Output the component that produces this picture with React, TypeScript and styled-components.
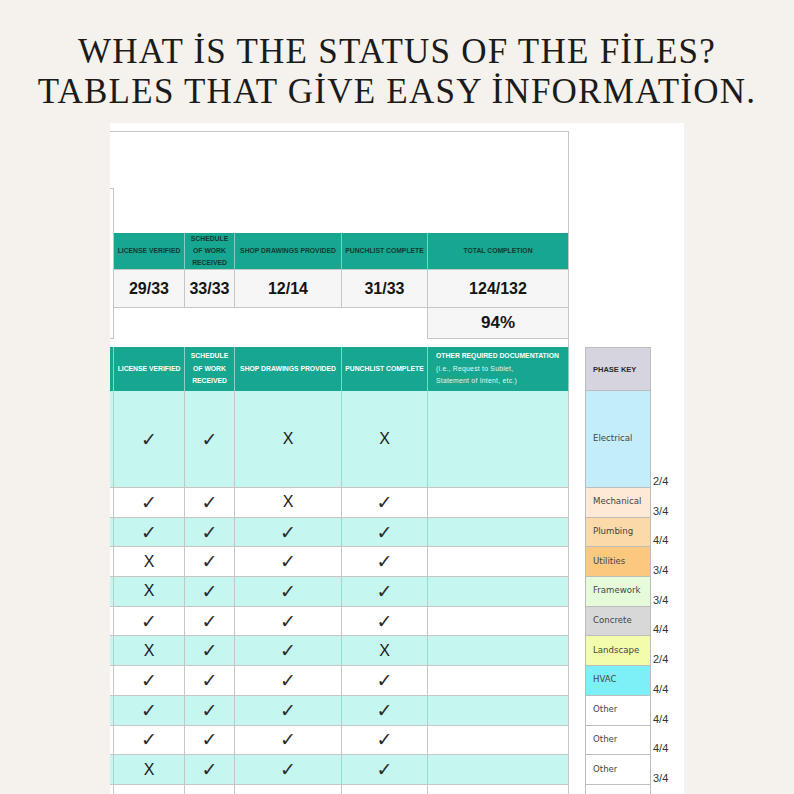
import React from 'react';
import styled, { createGlobalStyle } from 'styled-components';

const LINE = '#c6c6c6';
const TEAL = '#17a68f';
const MINT = '#c5f6ef';

const Global = createGlobalStyle`
  html, body { margin: 0; padding: 0; background: #f5f1ec; overflow: hidden; }
  #root { width: 794px; height: 794px; }
  * { box-sizing: border-box; }
`;

const Page = styled.div`
  width: 794px;
  height: 794px;
  overflow: hidden;
  background: #f5f1ec;
  display: flex;
  flex-direction: column;
`;

const Title = styled.h1`
  margin: 0;
  padding-top: 32px;
  text-align: center;
  font-family: "Liberation Serif", "DejaVu Serif", serif;
  font-weight: 400;
  font-size: 35px;
  line-height: 40px;
  letter-spacing: 1.25px;
  color: #1b1b1b;
`;

const TitleLine = styled.span`
  display: block;
  white-space: nowrap;
`;

const Panel = styled.div`
  margin: 11px 0 0 110px;
  width: 574px;
  flex: 1;
  background: #ffffff;
  overflow: hidden;
  font-family: "Liberation Sans", Arial, sans-serif;
`;

/* ---------- summary box ---------- */

const TopBox = styled.div`
  margin-top: 8px;
  width: 459px;
  border-top: 1px solid ${LINE};
  border-right: 1px solid ${LINE};
  display: grid;
  grid-template-columns: 4px 71px 50px 107px 86px 140px;
  grid-template-rows: 56px 45px 37px 38px 31px;
`;

const Blank = styled.div<{ $from: number; $to: number; $edge?: boolean }>`
  grid-column: ${(p) => p.$from} / ${(p) => p.$to};
  border-right: ${(p) => (p.$edge ? `1px solid ${LINE}` : 'none')};
`;

const SideEdge = styled.div<{ $top?: boolean; $bottom?: boolean }>`
  border-right: 1px solid ${LINE};
  border-top: ${(p) => (p.$top ? `1px solid ${LINE}` : 'none')};
  border-bottom: ${(p) => (p.$bottom ? `1px solid ${LINE}` : 'none')};
`;

const SumHead = styled.div<{ $last?: boolean }>`
  background: ${TEAL};
  color: #123a33;
  font-size: 6.8px;
  font-weight: 700;
  line-height: 12px;
  text-align: center;
  display: flex;
  flex-direction: column;
  align-items: center;
  justify-content: center;
  border-right: ${(p) => (p.$last ? 'none' : '1px solid #86cbbf')};
  border-bottom: 1px solid ${LINE};
  white-space: nowrap;
`;

const SumValue = styled.div<{ $last?: boolean }>`
  background: #f6f6f6;
  color: #151515;
  font-size: 16px;
  font-weight: 700;
  display: flex;
  align-items: center;
  justify-content: center;
  border-right: ${(p) => (p.$last ? 'none' : `1px solid ${LINE}`)};
  border-bottom: 1px solid ${LINE};
`;

const PctCell = styled(SumValue)`
  font-size: 17px;
`;

const BoxGap = styled.div`
  width: 459px;
  height: 8px;
  border-right: 1px solid ${LINE};
`;

/* ---------- detail table ---------- */

const Row = styled.div<{ $h: number }>`
  display: flex;
  height: ${(p) => p.$h}px;
`;

const Main = styled.div`
  flex: none;
  width: 459px;
  display: grid;
  grid-template-columns: 4px 71px 50px 107px 86px 141px;
`;

const HeadCell = styled.div<{ $left?: boolean }>`
  background: ${TEAL};
  color: #ffffff;
  font-size: 6.8px;
  font-weight: 700;
  line-height: 12.5px;
  text-align: ${(p) => (p.$left ? 'left' : 'center')};
  display: flex;
  flex-direction: column;
  align-items: ${(p) => (p.$left ? 'flex-start' : 'center')};
  justify-content: ${(p) => (p.$left ? 'flex-start' : 'center')};
  padding: ${(p) => (p.$left ? '3px 0 0 8px' : '0')};
  border-right: 1px solid #8fcfc4;
  white-space: nowrap;
`;

const HeadNote = styled.span`
  font-weight: 400;
  color: #e4f6f2;
  letter-spacing: 0.25px;
`;

const Cell = styled.div<{ $bg: string }>`
  background: ${(p) => p.$bg};
  border-right: 1px solid ${LINE};
  border-bottom: 1px solid ${LINE};
  display: flex;
  align-items: center;
  justify-content: center;
  color: #1d1d1d;
`;

const Check = styled.span`
  font-family: "DejaVu Sans ExtraLight", "DejaVu Sans", sans-serif;
  font-size: 19px;
  line-height: 1;
  color: #2a2a2a;
`;

const Cross = styled.span`
  font-family: "Liberation Sans", Arial, sans-serif;
  font-size: 16px;
  line-height: 1;
  color: #1a1a1a;
`;

const KeyCell = styled.div<{ $bg: string; $head?: boolean }>`
  flex: none;
  margin-left: 16px;
  width: 66px;
  background: ${(p) => p.$bg};
  border: 1px solid #bdbdbd;
  border-top: ${(p) => (p.$head ? '1px solid #bdbdbd' : 'none')};
  display: flex;
  align-items: center;
  padding-left: 7px;
  font-family: ${(p) => (p.$head ? '"Liberation Sans", Arial, sans-serif' : '"DejaVu Sans", sans-serif')};
  font-size: ${(p) => (p.$head ? '7.5px' : '8.6px')};
  font-weight: ${(p) => (p.$head ? 700 : 400)};
  color: ${(p) => (p.$head ? '#2b2b2b' : '#454545')};
  padding-bottom: ${(p) => (p.$head ? '0' : '2px')};
`;

const Fraction = styled.div`
  align-self: flex-end;
  padding-left: 2px;
  margin-bottom: 1px;
  font-family: "Liberation Sans", Arial, sans-serif;
  font-size: 11px;
  line-height: 12px;
  color: #333333;
`;

type DataRow = { marks: string; key: string; color: string; frac: string; h: number };

const ROWS: DataRow[] = [
  { marks: 'vvxx', key: 'Electrical', color: '#c3eef9', frac: '2/4', h: 97 },
  { marks: 'vvxv', key: 'Mechanical', color: '#fde9d5', frac: '3/4', h: 29.7 },
  { marks: 'vvvv', key: 'Plumbing', color: '#fcd9a8', frac: '4/4', h: 29.7 },
  { marks: 'xvvv', key: 'Utilities', color: '#fbc880', frac: '3/4', h: 29.7 },
  { marks: 'xvvv', key: 'Framework', color: '#e6fbd9', frac: '3/4', h: 29.7 },
  { marks: 'vvvv', key: 'Concrete', color: '#d8d8d8', frac: '4/4', h: 29.7 },
  { marks: 'xvvx', key: 'Landscape', color: '#f3fcaa', frac: '2/4', h: 29.7 },
  { marks: 'vvvv', key: 'HVAC', color: '#7df0f7', frac: '4/4', h: 29.7 },
  { marks: 'vvvv', key: 'Other', color: '#ffffff', frac: '4/4', h: 29.7 },
  { marks: 'vvvv', key: 'Other', color: '#ffffff', frac: '4/4', h: 29.7 },
  { marks: 'xvvv', key: 'Other', color: '#ffffff', frac: '3/4', h: 29.7 },
  { marks: 'vvvv', key: 'Other', color: '#ffffff', frac: '4/4', h: 29.7 },
];

const Mark = ({ m }: { m: string }) => (m === 'v' ? <Check>✓</Check> : <Cross>X</Cross>);

const SUMMARY = [
  { head: 'LICENSE VERIFIED', value: '29/33' },
  { head: 'SCHEDULE\nOF WORK\nRECEIVED', value: '33/33' },
  { head: 'SHOP DRAWINGS PROVIDED', value: '12/14' },
  { head: 'PUNCHLIST COMPLETE', value: '31/33' },
  { head: 'TOTAL COMPLETION', value: '124/132' },
];

const HEADS = ['LICENSE VERIFIED', 'SCHEDULE\nOF WORK\nRECEIVED', 'SHOP DRAWINGS PROVIDED', 'PUNCHLIST COMPLETE'];

const Lines = ({ text }: { text: string }) => (
  <>
    {text.split('\n').map((t, i) => (
      <span key={i}>{t}</span>
    ))}
  </>
);

export default function App() {
  return (
    <Page>
      <Global />
      <Title>
        <TitleLine>WHAT İS THE STATUS OF THE FİLES?</TitleLine>
        <TitleLine>TABLES THAT GİVE EASY İNFORMATİON.</TitleLine>
      </Title>
      <Panel>
        <TopBox>
          <Blank $from={1} $to={7} />
          <SideEdge $top />
          <Blank $from={2} $to={7} />
          <SideEdge />
          {SUMMARY.map((s, i) => (
            <SumHead key={s.head} $last={i === SUMMARY.length - 1}>
              <Lines text={s.head} />
            </SumHead>
          ))}
          <SideEdge />
          {SUMMARY.map((s, i) => (
            <SumValue key={s.value} $last={i === SUMMARY.length - 1}>
              {s.value}
            </SumValue>
          ))}
          <SideEdge $bottom />
          <Blank $from={2} $to={6} $edge />
          <PctCell $last>94%</PctCell>
        </TopBox>
        <BoxGap />
        <Row $h={44}>
          <Main>
            <HeadCell />
            {HEADS.map((h) => (
              <HeadCell key={h}>
                <Lines text={h} />
              </HeadCell>
            ))}
            <HeadCell $left>
              <span>OTHER REQUIRED DOCUMENTATION</span>
              <HeadNote>(i.e., Request to Sublet,</HeadNote>
              <HeadNote>Statement of Intent, etc.)</HeadNote>
            </HeadCell>
          </Main>
          <KeyCell $bg="#d6d4de" $head>
            PHASE KEY
          </KeyCell>
        </Row>
        {ROWS.map((r, i) => {
          const bg = i % 2 === 0 ? MINT : '#ffffff';
          return (
            <Row key={i} $h={r.h}>
              <Main>
                <Cell $bg={bg} />
                {r.marks.split('').map((m, j) => (
                  <Cell key={j} $bg={bg}>
                    <Mark m={m} />
                  </Cell>
                ))}
                <Cell $bg={bg} />
              </Main>
              <KeyCell $bg={r.color}>{r.key}</KeyCell>
              <Fraction>{r.frac}</Fraction>
            </Row>
          );
        })}
      </Panel>
    </Page>
  );
}
